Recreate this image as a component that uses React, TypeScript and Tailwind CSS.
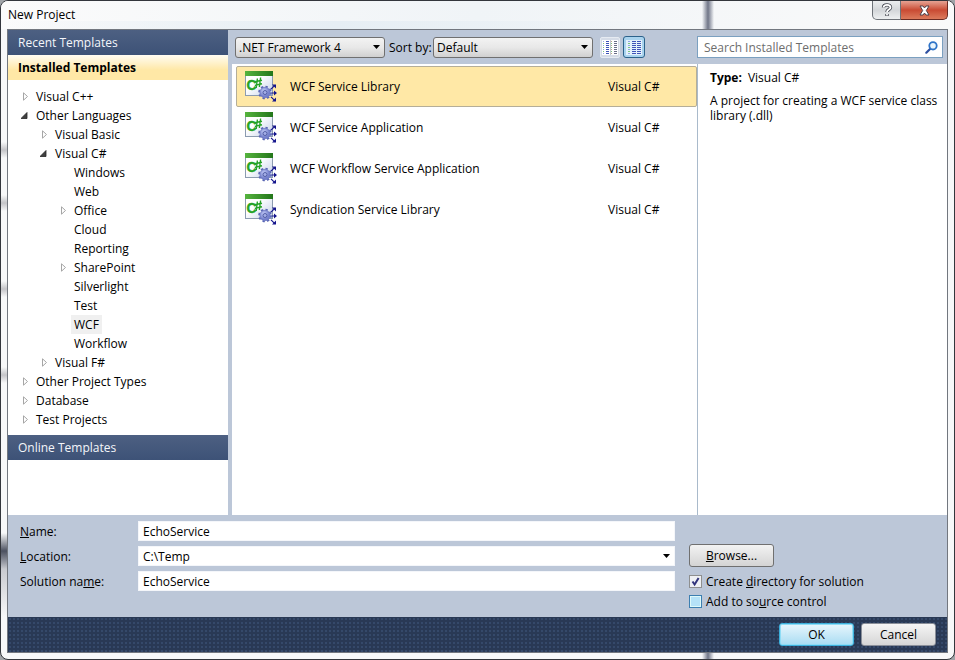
import { useState } from "react";

const treeData = [
    { name: "Visual C++", depth: 0, arrow: "closed" },
    { name: "Other Languages", depth: 0, arrow: "open" },
    { name: "Visual Basic", depth: 1, arrow: "closed" },
    { name: "Visual C#", depth: 1, arrow: "open" },
    { name: "Windows", depth: 2, arrow: "none" },
    { name: "Web", depth: 2, arrow: "none" },
    { name: "Office", depth: 2, arrow: "closed" },
    { name: "Cloud", depth: 2, arrow: "none" },
    { name: "Reporting", depth: 2, arrow: "none" },
    { name: "SharePoint", depth: 2, arrow: "closed" },
    { name: "Silverlight", depth: 2, arrow: "none" },
    { name: "Test", depth: 2, arrow: "none" },
    { name: "WCF", depth: 2, arrow: "none" },
    { name: "Workflow", depth: 2, arrow: "none" },
    { name: "Visual F#", depth: 1, arrow: "closed" },
    { name: "Other Project Types", depth: 0, arrow: "closed" },
    { name: "Database", depth: 0, arrow: "closed" },
    { name: "Test Projects", depth: 0, arrow: "closed" },
]

const indent = ["pl-[13px]", "pl-8", "pl-[51px]"]

const templates = [
    "WCF Service Library",
    "WCF Service Application",
    "WCF Workflow Service Application",
    "Syndication Service Library",
]

function TreeArrow({ type }: { type: string }) {
    return (
        <svg width="8" height="9" viewBox="0 0 8 9" className="shrink-0" aria-hidden="true">
            {type === "closed" && <path d="M2.5 0.8 L6.5 4.5 L2.5 8.2 Z" fill="#fff" stroke="#a6a6a6" />}
            {type === "open" && <path d="M6 1.5 V7.5 H0 Z" fill="#404040" stroke="#262626" strokeWidth="0.8" />}
        </svg>
    )
}

function Caret() {
    return (
        <svg width="7" height="4" viewBox="0 0 7 4" className="pointer-events-none absolute right-[5px] top-1/2 -translate-y-1/2" aria-hidden="true">
            <path d="M0 0 H7 L3.5 4 Z" fill="#000" />
        </svg>
    )
}

function TemplateIcon() {
    return (
        <svg width="32" height="32" viewBox="0 0 32 32" className="shrink-0" aria-hidden="true">
            <defs>
                <linearGradient id="bar" x1="0" x2="1">
                    <stop offset="0" stopColor="#56b43e" />
                    <stop offset="1" stopColor="#23761a" />
                </linearGradient>
                <linearGradient id="page" x1="0" y1="0" x2="1" y2="1">
                    <stop offset="0.4" stopColor="#fff" />
                    <stop offset="1" stopColor="#c4d0e8" />
                </linearGradient>
                <radialGradient id="cog" cx="0.4" cy="0.35">
                    <stop offset="0" stopColor="#c5cdf8" />
                    <stop offset="1" stopColor="#7480cc" />
                </radialGradient>
            </defs>
            <rect x="0.5" y="0.5" width="27" height="24" fill="url(#page)" stroke="#8c9bb0" />
            <rect x="0" y="0" width="28" height="5" fill="url(#bar)" />
            <text x="1.5" y="19" fontSize="14" fontWeight="700" fill="#25a325" stroke="#25a325" strokeWidth="0.4" fontFamily="Liberation Sans, sans-serif">C</text>
            <path d="M12.4 7.5 L11.2 17 M15.6 6.5 L14.4 16 M9.8 10.8 L17 9.2 M9.8 14.4 L17 12.8" stroke="#25a325" strokeWidth="1.4" fill="none" />
            <circle cx="20" cy="21.5" r="5.9" fill="none" stroke="#5a66b4" strokeWidth="1.8" strokeDasharray="2.3 2.3" />
            <circle cx="20" cy="21.5" r="5.2" fill="url(#cog)" stroke="#6974c0" strokeWidth="0.7" />
            <circle cx="20" cy="21.5" r="2" fill="#a4aee6" stroke="#4b569f" strokeWidth="0.9" />
            <path d="M26 18.2 L29.6 14.6 M26.6 22 H30 M26 25.8 L29.6 29.4" stroke="#14148c" strokeWidth="1.2" fill="none" />
            <path d="M27 13.6 H31 V17.6 Z M29 19.4 L32 22 L29 24.6 Z M27 30.6 H31 V26.6 Z" fill="#14148c" />
        </svg>
    )
}

function ColumnsIcon({ wide }: { wide?: boolean }) {
    const rows = [1, 3, 5, 7, 9, 11, 13]
    return (
        <svg width="16" height="15" viewBox="0 0 16 15" aria-hidden="true" shapeRendering="crispEdges">
            <rect width="16" height="15" fill={wide ? "#e4f1fc" : "#fff"} />
            {rows.map((y, idx) => (
                <g key={y}>
                    <rect x={wide ? 2 : 1} y={y} width={wide ? 2 : 1} height="1" fill={idx % 2 ? "#7cc47c" : "#8fa8e0"} />
                    <rect x={wide ? 6 : 4} y={y} width={wide ? 4 : 3} height="1" fill="#3f55b8" />
                    {!wide && <rect x="9" y={y} width="1" height="1" fill={idx % 2 ? "#7cc47c" : "#b9a98a"} />}
                    <rect x={wide ? 11 : 12} y={y} width={wide ? 4 : 3} height="1" fill={wide ? "#3f55b8" : "#6a6f88"} />
                </g>
            ))}
            {!wide && <rect x="8" y="0" width="1" height="15" fill="#c3c8d2" />}
        </svg>
    )
}

export default function App() {
    const [selected, setSelected] = useState(0)
    const [createDir, setCreateDir] = useState(true)
    const [sourceControl, setSourceControl] = useState(false)

    const headerClass = "flex h-[25px] w-full shrink-0 items-center bg-linear-to-b from-[#4d6082] to-[#3d5277] pl-[10px] text-left text-[#f4f6fa]"
    const selectClass = "h-full w-full appearance-none rounded-[3px] border border-[#707070] bg-linear-to-b from-[#f3f3f3] via-[#e8e8e8] to-[#d0d0d0] pl-[3px] pr-4 text-black outline-none"
    const fieldClass = "h-5 w-full appearance-none border border-[#f4f6fa] bg-white px-1 text-black outline-none"
    const buttonClass = "h-[23px] rounded-[3px] border bg-linear-to-b text-center text-black"

    return (
        <div className="min-h-screen bg-[#a0a4a8] font-['Open_Sans',sans-serif] text-[12px] leading-[15px] text-black">
            <div className="relative flex min-h-screen flex-col overflow-hidden rounded-lg border border-[#33363c] bg-[#f7f8f9] px-[6px] pb-[6px]">
                {/* blurred windows showing through the glass frame */}
                <div className="absolute inset-x-0 top-0 h-7 bg-linear-to-r from-[#fbfbfb] via-[#f0f4f7] to-[#fafafa]" />
                <div className="absolute left-0 top-5 h-2 w-[670px] bg-linear-to-r from-transparent via-[#e6eef4] to-transparent" />
                <div className="absolute left-[701px] top-0 h-7 w-3 bg-linear-to-r from-transparent via-[#6f7587] to-transparent" />
                <div className="absolute bottom-0 left-[701px] h-[6px] w-3 bg-linear-to-r from-transparent via-[#6f7587] to-transparent" />
                <div className="absolute left-0 top-[141px] h-4 w-[6px] bg-linear-to-b from-transparent via-[#c4c4c8] to-transparent" />
                <div className="absolute left-0 top-[194px] h-4 w-[6px] bg-linear-to-b from-transparent via-[#c4c4c8] to-transparent" />
                <div className="absolute left-0 top-[280px] h-4 w-[6px] bg-linear-to-b from-transparent via-[#c4c4c8] to-transparent" />
                <div className="absolute left-0 top-[366px] h-4 w-[6px] bg-linear-to-b from-transparent via-[#c4c4c8] to-transparent" />
                <div className="absolute left-0 top-[532px] h-9 w-[6px] bg-linear-to-b from-transparent via-[#4c5160] to-[#c8cad0]" />
                <div className="absolute left-0 top-[568px] h-12 w-[6px] bg-linear-to-b from-[#c8cad0] to-transparent" />

                <header className="relative flex h-7 shrink-0 items-start justify-between pl-[1px]">
                    <h1 className="pt-[6px]">New Project</h1>
                    <div className="flex h-[19px]">
                        <button aria-label="Help" className="flex w-[29px] items-center justify-center rounded-bl-[5px] border border-t-0 border-[#6d7278] bg-linear-to-b from-[#eceeef] via-[#d3d6d9] to-[#eef0f1]">
                            <svg width="12" height="14" viewBox="0 0 12 14" aria-hidden="true">
                                <path d="M2.5 4.5 C2.5 1 9.5 1 9.5 4.5 C9.5 6.5 6 6.5 6 9 M6 11 V13" stroke="#42464f" strokeWidth="3.4" fill="none" />
                                <path d="M2.5 4.5 C2.5 1 9.5 1 9.5 4.5 C9.5 6.5 6 6.5 6 9 M6 11 V12.6" stroke="#fff" strokeWidth="1.8" fill="none" />
                            </svg>
                        </button>
                        <button aria-label="Close" className="flex w-[47px] items-center justify-center rounded-br-[5px] border border-l-0 border-t-0 border-[#6b2a22] bg-linear-to-b from-[#e5a293] via-[#c94a33] to-[#dc7a5c]">
                            <svg width="13" height="11" viewBox="0 0 13 11" aria-hidden="true">
                                <path d="M2 1 H5 L6.5 3 L8 1 H11 L8.3 5.5 L11 10 H8 L6.5 8 L5 10 H2 L4.7 5.5 Z" fill="#fff" stroke="#4f4048" strokeWidth="1" strokeLinejoin="round" />
                            </svg>
                        </button>
                    </div>
                </header>

                <div className="relative flex flex-1 flex-col border border-[#72777f] bg-[#bcc7d8]">
                    <div className="flex flex-1">
                        <nav className="flex w-[220px] shrink-0 flex-col bg-white">
                            <button className={headerClass}>Recent Templates</button>
                            <button className="flex h-[25px] w-full shrink-0 items-center bg-linear-to-b from-[#fffcf2] to-[#ffe8a6] to-60% pl-[10px] text-left font-bold">Installed Templates</button>
                            <ul className="pb-[6px] pt-[7px]">
                                {treeData.map((item, idx) => (
                                    <li key={idx} className={`flex h-[19px] items-center ${indent[item.depth]}`}>
                                        <TreeArrow type={item.arrow} />
                                        <span className={`ml-1 px-[3px] py-[2px] ${item.name === "WCF" ? "bg-[#f0f0f0]" : ""}`}>{item.name}</span>
                                    </li>
                                ))}
                            </ul>
                            <button className={headerClass}>Online Templates</button>
                        </nav>

                        <main className="ml-1 flex flex-1 flex-col">
                            <div className="flex h-[34px] shrink-0 items-center pl-[3px] pr-1">
                                <div className="relative h-[21px] w-[150px]">
                                    <select aria-label="Framework" className={selectClass}>
                                        <option>.NET Framework 4</option>
                                    </select>
                                    <Caret />
                                </div>
                                <label htmlFor="sort" className="ml-1 w-11 whitespace-nowrap">Sort by:</label>
                                <div className="relative h-[21px] w-[160px]">
                                    <select id="sort" className={selectClass}>
                                        <option>Default</option>
                                    </select>
                                    <Caret />
                                </div>
                                <button aria-label="Small icons" className="ml-[7px] flex h-[21px] w-5 items-center justify-center rounded-[2px] border border-[#e6ebf2] bg-[#d5dce7]">
                                    <ColumnsIcon />
                                </button>
                                <button aria-label="Medium icons" className="ml-[3px] flex h-[22px] w-[22px] items-center justify-center rounded-[3px] border border-[#2c628b] bg-[#a9d3ee]">
                                    <ColumnsIcon wide />
                                </button>
                                <div className="ml-auto flex h-[22px] w-[246px] items-center border border-[#7ba0c0] bg-white pl-[6px] pr-1">
                                    <input aria-label="Search Installed Templates" placeholder="Search Installed Templates" className="min-w-0 flex-1 outline-none placeholder:text-[#6d6d6d]" />
                                    <svg width="13" height="13" viewBox="0 0 13 13" aria-hidden="true">
                                        <path d="M5.3 7.7 L1.3 11.7" stroke="#2d4fa0" strokeWidth="2.2" strokeLinecap="round" />
                                        <circle cx="8" cy="4.8" r="3.7" fill="#eaf6fd" stroke="#2f74c8" strokeWidth="1.8" />
                                    </svg>
                                </div>
                            </div>

                            <div className="flex flex-1 bg-white">
                                <ul className="flex-1 pl-1 pt-[2px]">
                                    {templates.map((name, idx) => (
                                        <li key={name}>
                                            <button
                                                onClick={() => setSelected(idx)}
                                                className={`flex h-[41px] w-full items-center rounded-[2px] border pl-2 text-left ${selected === idx ? "border-[#b5ae98] bg-[#ffe8a6]" : "border-transparent"}`}
                                            >
                                                <TemplateIcon />
                                                <span className="ml-[13px] flex-1">{name}</span>
                                                <span className="w-[88px]">Visual C#</span>
                                            </button>
                                        </li>
                                    ))}
                                </ul>
                                <aside className="w-[250px] shrink-0 border-l border-[#a9bacb] pl-3 pr-1 pt-[6px]">
                                    <p><b className="mr-[6px]">Type:</b>Visual C#</p>
                                    <p className="mt-2">A project for creating a WCF service class library (.dll)</p>
                                </aside>
                            </div>
                        </main>
                    </div>

                    <form className="flex pb-[6px] pl-3 pt-[6px]" onSubmit={(e) => e.preventDefault()}>
                        <div className="grid flex-1 grid-cols-[118px_1fr] content-start items-center gap-y-[5px]">
                            <label htmlFor="name"><u>N</u>ame:</label>
                            <input id="name" defaultValue="EchoService" className={fieldClass} />
                            <label htmlFor="location"><u>L</u>ocation:</label>
                            <div className="relative">
                                <select id="location" className={`block ${fieldClass}`}>
                                    <option>C:\Temp</option>
                                </select>
                                <Caret />
                            </div>
                            <label htmlFor="solution">Solution na<u>m</u>e:</label>
                            <input id="solution" defaultValue="EchoService" className={fieldClass} />
                        </div>
                        <div className="ml-[14px] w-[258px] pt-[23px]">
                            <button type="button" className={`${buttonClass} mb-1 block w-[85px] border-[#707070] from-[#f3f3f3] to-[#d4d4d4]`}><u>B</u>rowse...</button>
                            <label className="flex h-5 items-center gap-1">
                                <span className="relative h-[13px] w-[13px]">
                                    <input type="checkbox" checked={createDir} onChange={(e) => setCreateDir(e.target.checked)} className="block h-[13px] w-[13px] appearance-none border border-[#8e8f8f] bg-[#eef0f4]" />
                                    {createDir && (
                                        <svg width="13" height="13" viewBox="0 0 13 13" className="pointer-events-none absolute inset-0" aria-hidden="true">
                                            <path d="M3.5 6.5 L5.6 9.5 L9.6 3" stroke="#31347c" strokeWidth="2" fill="none" />
                                        </svg>
                                    )}
                                </span>
                                <span>Create <u>d</u>irectory for solution</span>
                            </label>
                            <label className="flex h-5 items-center gap-1">
                                <input type="checkbox" checked={sourceControl} onChange={(e) => setSourceControl(e.target.checked)} className="h-[13px] w-[13px] appearance-none border border-[#3c7fb1] bg-[#b5e2f8] shadow-[inset_0_0_0_1px_#def9fa] checked:bg-[#31347c]" />
                                <span>Add to so<u>u</u>rce control</span>
                            </label>
                        </div>
                    </form>

                    <footer className="flex h-[35px] items-center justify-end gap-[7px] bg-[#293955] bg-[radial-gradient(#35496a_1px,transparent_1px)] bg-size-[4px_4px] pr-[11px]">
                        <button className={`${buttonClass} w-[75px] border-[#3cb0dc] from-[#e8f6fd] to-[#a8dcf2] shadow-[inset_0_0_0_1px_#8fdcf5]`}>OK</button>
                        <button className={`${buttonClass} w-[75px] border-[#8a8f99] from-[#f5f5f5] to-[#d6d6d6]`}>Cancel</button>
                    </footer>
                </div>
            </div>
        </div>
    )
}
